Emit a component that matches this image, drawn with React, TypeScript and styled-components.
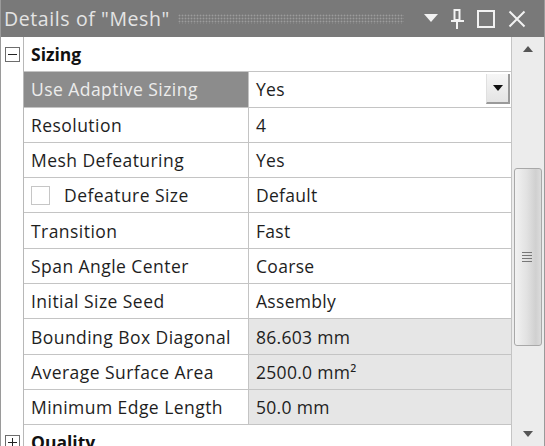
import React from 'react';
import styled, { createGlobalStyle } from 'styled-components';

const GlobalStyle = createGlobalStyle`
  html, body {
    margin: 0;
    padding: 0;
    background: #ffffff;
  }
  body {
    font-family: "Open Sans", "Noto Sans", sans-serif;
  }
`;

interface Prop {
    label: string;
    value: string;
    selected?: boolean;
    readOnly?: boolean;
    checkbox?: boolean;
    dropdown?: boolean;
}

const sizing: Prop[] = [
    { label: 'Use Adaptive Sizing', value: 'Yes', selected: true, dropdown: true },
    { label: 'Resolution', value: '4' },
    { label: 'Mesh Defeaturing', value: 'Yes' },
    { label: 'Defeature Size', value: 'Default', checkbox: true },
    { label: 'Transition', value: 'Fast' },
    { label: 'Span Angle Center', value: 'Coarse' },
    { label: 'Initial Size Seed', value: 'Assembly' },
    { label: 'Bounding Box Diagonal', value: '86.603 mm', readOnly: true },
    { label: 'Average Surface Area', value: '2500.0 mm²', readOnly: true },
    { label: 'Minimum Edge Length', value: '50.0 mm', readOnly: true },
];

const Panel = styled.div`
    width: 545px;
    height: 446px;
    box-sizing: border-box;
    border-left: 1px solid #9a9a9a;
    border-right: 1px solid #9a9a9a;
    display: flex;
    flex-direction: column;
    overflow: hidden;
`;

const TitleBar = styled.div`
    height: 37px;
    flex: none;
    background: #797979;
    display: flex;
    align-items: center;
    padding: 0 18px 0 3px;
    gap: 8px;
`;

const Title = styled.span`
    font-size: 19.5px;
    color: #e4e4e4;
    white-space: nowrap;
    letter-spacing: 0.6px;
`;

const Grip = styled.div`
    flex: 1;
    height: 10px;
    margin: 1px 12px 0 0;
    background-image: radial-gradient(circle, #9c9c9c 0.8px, transparent 1.1px);
    background-size: 3px 3px;
`;

const TitleButtons = styled.div`
    display: flex;
    align-items: center;
    gap: 13px;
`;

const Body = styled.div`
    flex: 1;
    display: flex;
    min-height: 0;
`;

const Grid = styled.div`
    flex: 1;
    display: flex;
    flex-direction: column;
    border-right: 1px solid #c4c4c4;
    overflow: hidden;
`;

const Row = styled.div`
    display: flex;
    height: 35.3px;
    flex: none;
`;

const Gutter = styled.div`
    width: 23px;
    flex: none;
    border-right: 1px solid #b8b8b8;
    display: flex;
    justify-content: center;
    padding-top: 10px;
    box-sizing: border-box;
`;

const Toggle = styled.div<{ collapsed?: boolean }>`
    width: 13px;
    height: 13px;
    border: 1px solid #6d6d6d;
    position: relative;
    background: #fff;

    &::before {
        content: '';
        position: absolute;
        left: 2px;
        right: 2px;
        top: 6px;
        height: 1px;
        background: #222;
    }

    &::after {
        content: '';
        display: ${p => (p.collapsed ? 'block' : 'none')};
        position: absolute;
        top: 2px;
        bottom: 2px;
        left: 6px;
        width: 1px;
        background: #222;
    }
`;

const GroupCell = styled.div`
    flex: 1;
    display: flex;
    align-items: center;
    padding-left: 7px;
    font-weight: 700;
    font-size: 17.5px;
    color: #111;
    border-bottom: 1px solid #c4c4c4;
`;

const LabelCell = styled.div<{ selected?: boolean }>`
    width: 225px;
    flex: none;
    box-sizing: border-box;
    display: flex;
    align-items: center;
    gap: 14px;
    padding-left: 7px;
    font-size: 17.5px;
    letter-spacing: 0.45px;
    color: ${p => (p.selected ? '#ececec' : '#1e1e1e')};
    background: ${p => (p.selected ? '#8c8c8c' : '#ffffff')};
    border-right: 1px solid #c4c4c4;
    border-bottom: 1px solid #c4c4c4;
    white-space: nowrap;
`;

const ValueCell = styled.div<{ readOnly?: boolean }>`
    flex: 1;
    display: flex;
    align-items: center;
    padding-left: 7px;
    font-size: 17.5px;
    letter-spacing: 0.3px;
    color: #1e1e1e;
    background: ${p => (p.readOnly ? '#e6e6e6' : '#ffffff')};
    border-bottom: 1px solid #c4c4c4;
    white-space: nowrap;
`;

const ValueText = styled.span`
    flex: 1;
`;

const CheckBox = styled.span`
    width: 19px;
    height: 19px;
    box-sizing: border-box;
    border: 1px solid #c6c6c6;
    background: #fff;
    flex: none;
`;

const DropButton = styled.div`
    width: 24px;
    height: 30px;
    box-sizing: border-box;
    margin-right: 1px;
    background: linear-gradient(#f6f6f6, #e4e4e4);
    border-left: 1px solid #e0e0e0;
    border-right: 2px solid #9a9a9a;
    border-bottom: 2px solid #9a9a9a;
    display: flex;
    align-items: center;
    justify-content: center;
`;

const ScrollBar = styled.div`
    width: 32px;
    flex: none;
    background: #ececec;
    display: flex;
    flex-direction: column;
    align-items: center;
    padding: 0 2px;
    box-sizing: border-box;
`;

const ArrowSlot = styled.div`
    height: 24px;
    width: 100%;
    display: flex;
    align-items: center;
    justify-content: center;
    flex: none;
`;

const Track = styled.div`
    flex: 1;
    width: 100%;
    padding-top: 107px;
    box-sizing: border-box;
`;

const Thumb = styled.div`
    height: 178px;
    box-sizing: border-box;
    border: 1px solid #a8a8a8;
    border-radius: 3px;
    background: linear-gradient(90deg, #f2f2f2 0%, #e2e2e2 45%, #d0d0d0 80%, #dcdcdc 100%);
    display: flex;
    align-items: center;
    justify-content: center;
`;

const GripLines = styled.div`
    display: flex;
    flex-direction: column;
    gap: 2px;
    margin-right: 2px;

    span {
        display: block;
        width: 10px;
        height: 1px;
        background: #777;
    }
`;

const Tri = ({ color, up }: { color: string; up?: boolean }) => (
    <svg width="10" height="6" viewBox="0 0 10 6">
        <polygon points={up ? '0,6 10,6 5,0' : '0,0 10,0 5,6'} fill={color} />
    </svg>
);

const PropertyRow: React.FC<{ p: Prop }> = ({ p }) => (
    <Row>
        <Gutter />
        <LabelCell selected={p.selected}>
            {p.checkbox && <CheckBox />}
            {p.label}
        </LabelCell>
        <ValueCell readOnly={p.readOnly}>
            <ValueText>{p.value}</ValueText>
            {p.dropdown && (
                <DropButton>
                    <Tri color="#111" />
                </DropButton>
            )}
        </ValueCell>
    </Row>
);

export default function App() {
    return (
        <>
            <GlobalStyle />
            <Panel>
                <TitleBar>
                    <Title>Details of "Mesh"</Title>
                    <Grip />
                    <TitleButtons>
                        <svg width="14" height="9" viewBox="0 0 14 9">
                            <polygon points="0,0 14,0 7,8" fill="#f2f2f2" />
                        </svg>
                        <svg width="13" height="20" viewBox="0 0 13 20">
                            <path d="M3.5 1h5v10h-5z" fill="none" stroke="#f2f2f2" strokeWidth="2" />
                            <path d="M0 12h13M6 12v8" stroke="#f2f2f2" strokeWidth="2" />
                        </svg>
                        <svg width="18" height="18" viewBox="0 0 18 18">
                            <rect x="1" y="1" width="16" height="16" fill="none" stroke="#f2f2f2" strokeWidth="2" />
                        </svg>
                        <svg width="18" height="18" viewBox="0 0 18 18">
                            <path d="M1.5 1.5l15 15M16.5 1.5l-15 15" stroke="#f2f2f2" strokeWidth="2" />
                        </svg>
                    </TitleButtons>
                </TitleBar>
                <Body>
                    <Grid>
                        <Row>
                            <Gutter>
                                <Toggle />
                            </Gutter>
                            <GroupCell>Sizing</GroupCell>
                        </Row>
                        {sizing.map(p => (
                            <PropertyRow key={p.label} p={p} />
                        ))}
                        <Row>
                            <Gutter>
                                <Toggle collapsed />
                            </Gutter>
                            <GroupCell>Quality</GroupCell>
                        </Row>
                    </Grid>
                    <ScrollBar>
                        <ArrowSlot>
                            <Tri color="#555" up />
                        </ArrowSlot>
                        <Track>
                            <Thumb>
                                <GripLines>
                                    <span />
                                    <span />
                                    <span />
                                    <span />
                                </GripLines>
                            </Thumb>
                        </Track>
                        <ArrowSlot>
                            <Tri color="#555" />
                        </ArrowSlot>
                    </ScrollBar>
                </Body>
            </Panel>
        </>
    );
}
